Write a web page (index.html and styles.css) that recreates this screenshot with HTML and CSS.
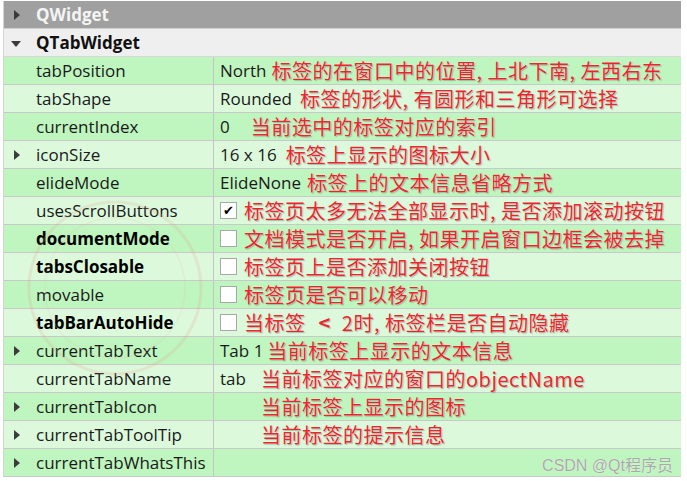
FILE: index.html
```html
<!DOCTYPE html>
<html>
<head>
<meta charset="utf-8">
<link rel="stylesheet" href="styles.css">
</head>
<body>
<div class="sheet">
  <div class="grid">
    <div class="row group gray"><span class="arrow right"></span><span class="gname">QWidget</span></div>
    <div class="row group light"><span class="arrow down"></span><span class="gname dark">QTabWidget</span></div>

    <div class="row g1"><div class="key">tabPosition</div><div class="val">North<span class="note n-p">标签的在窗口中的位置, 上北下南, 左西右东</span></div></div>
    <div class="row g2"><div class="key">tabShape</div><div class="val">Rounded<span class="note n-b">标签的形状, 有圆形和三角形可选择</span></div></div>
    <div class="row g1"><div class="key">currentIndex</div><div class="val">0<span class="note n-l">当前选中的标签对应的索引</span></div></div>
    <div class="row g2"><div class="key"><span class="arrow right"></span>iconSize</div><div class="val">16 x 16<span class="note n-a">标签上显示的图标大小</span></div></div>
    <div class="row g1"><div class="key">elideMode</div><div class="val">ElideNone<span class="note n-s">标签上的文本信息省略方式</span></div></div>
    <div class="row g2"><div class="key">usesScrollButtons</div><div class="val"><span class="check on">✔</span><span class="note n-c">标签页太多无法全部显示时, 是否添加滚动按钮</span></div></div>
    <div class="row g1"><div class="key bold">documentMode</div><div class="val"><span class="check"></span><span class="note n-c">文档模式是否开启, 如果开启窗口边框会被去掉</span></div></div>
    <div class="row g2"><div class="key bold">tabsClosable</div><div class="val"><span class="check"></span><span class="note n-c">标签页上是否添加关闭按钮</span></div></div>
    <div class="row g1"><div class="key">movable</div><div class="val"><span class="check"></span><span class="note n-c">标签页是否可以移动</span></div></div>
    <div class="row g2"><div class="key bold">tabBarAutoHide</div><div class="val"><span class="check"></span><span class="note n-c">当标签 <b class="lt">&lt;</b> 2时, 标签栏是否自动隐藏</span></div></div>
    <div class="row g1"><div class="key"><span class="arrow right"></span>currentTabText</div><div class="val">Tab 1<span class="note n-t">当前标签上显示的文本信息</span></div></div>
    <div class="row g2"><div class="key">currentTabName</div><div class="val"><span class="vfix">tab</span><span class="note">当前标签对应的窗口的objectName</span></div></div>
    <div class="row g1"><div class="key"><span class="arrow right"></span>currentTabIcon</div><div class="val"><span class="vfix"></span><span class="note">当前标签上显示的图标</span></div></div>
    <div class="row g2"><div class="key"><span class="arrow right"></span>currentTabToolTip</div><div class="val"><span class="vfix"></span><span class="note">当前标签的提示信息</span></div></div>
    <div class="row g1"><div class="key"><span class="arrow right"></span>currentTabWhatsThis</div><div class="val"></div></div>
  </div>

  <svg class="stamp" width="200" height="200" viewBox="0 0 200 200">
    <circle cx="100" cy="100" r="86" fill="none" stroke="#e6a08a" stroke-width="3"/>
    <circle cx="100" cy="100" r="70" fill="none" stroke="#ecc0b0" stroke-width="1.5"/>
  </svg>
  <div class="csdn">CSDN @Qt程序员</div>
</div>
</body>
</html>
```

FILE: styles.css
```css
html, body {
  margin: 0;
  padding: 0;
  background: #ffffff;
}

.sheet {
  position: relative;
  width: 687px;
  height: 481px;
  overflow: hidden;
  font-family: "Open Sans", "Noto Sans CJK SC", sans-serif;
}

.grid {
  margin: 1px 0 0 3px;
  width: 678px;
  border-left: 1px solid #d4d4d4;
  box-sizing: border-box;
}

.row {
  display: flex;
  height: 28px;
  box-sizing: border-box;
  border-bottom: 1px solid #c9c9c9;
  align-items: stretch;
}

.g1 { background: #bff5bf; }
.g2 { background: #dcf9dc; }

.group {
  align-items: center;
  position: relative;
}
.gray { background: #a0a0a0; border-bottom: 1px solid #cfcfcf; }
.light { background: #efefef; border-bottom: 1px solid #d8d8d8; }

.gname {
  position: absolute;
  left: 32px;
  font-size: 17px;
  font-weight: 700;
  color: #f4f4f4;
}
.gname.dark { color: #111111; }

.key {
  position: relative;
  width: 210px;
  flex: none;
  box-sizing: border-box;
  border-right: 1px solid #c4c4c4;
  padding-left: 32px;
  display: flex;
  align-items: center;
  font-size: 17px;
  color: #1a1a1a;
  white-space: nowrap;
}
.key.bold { font-weight: 700; color: #000; }

.val {
  flex: 1;
  display: flex;
  align-items: center;
  padding-left: 6px;
  font-size: 17px;
  color: #1a1a1a;
  white-space: nowrap;
}

.arrow {
  position: absolute;
  width: 0;
  height: 0;
}
.arrow.right {
  left: 10px;
  top: 50%;
  margin-top: -5px;
  border-top: 5px solid transparent;
  border-bottom: 5px solid transparent;
  border-left: 6px solid #3c3c3c;
}
.arrow.down {
  left: 7px;
  top: 50%;
  margin-top: -2px;
  border-left: 5px solid transparent;
  border-right: 5px solid transparent;
  border-top: 6px solid #3c3c3c;
}
.gray .arrow.right { border-left-color: #3a3a3a; }

.note {
  font-family: "Noto Sans CJK SC", sans-serif;
  font-size: 20px;
  color: #e8262b;
  letter-spacing: 0.5px;
  margin-left: 5px;
  text-shadow: 0 0 1px #ffffff, 1px 1px 1px rgba(90, 90, 90, 0.45);
  line-height: 1;
}
.n-s { margin-left: 6px; }
.n-t { margin-left: 4px; }
.n-p { margin-left: 5px; }
.n-a { margin-left: 9px; }
.n-b { margin-left: 8px; }
.n-l { margin-left: 21px; }
.n-c { margin-left: 7px; }
.note .lt { font-weight: 700; margin: 0 6px 0 8px; }

.vfix {
  display: inline-block;
  width: 36px;
}

.check {
  display: inline-flex;
  align-items: center;
  justify-content: center;
  width: 17px;
  height: 17px;
  box-sizing: border-box;
  border: 1px solid #a8a8a8;
  background: #ffffff;
  font-size: 13px;
  color: #000;
  line-height: 1;
}

.stamp {
  position: absolute;
  left: 15px;
  top: 188px;
  opacity: 0.2;
  pointer-events: none;
}

.csdn {
  position: absolute;
  right: 14px;
  top: 452px;
  font-family: "Liberation Sans", "Noto Sans CJK SC", sans-serif;
  font-size: 16px;
  color: #a9a9a9;
  text-shadow: 0 0 1px #ffffff;
}
```
